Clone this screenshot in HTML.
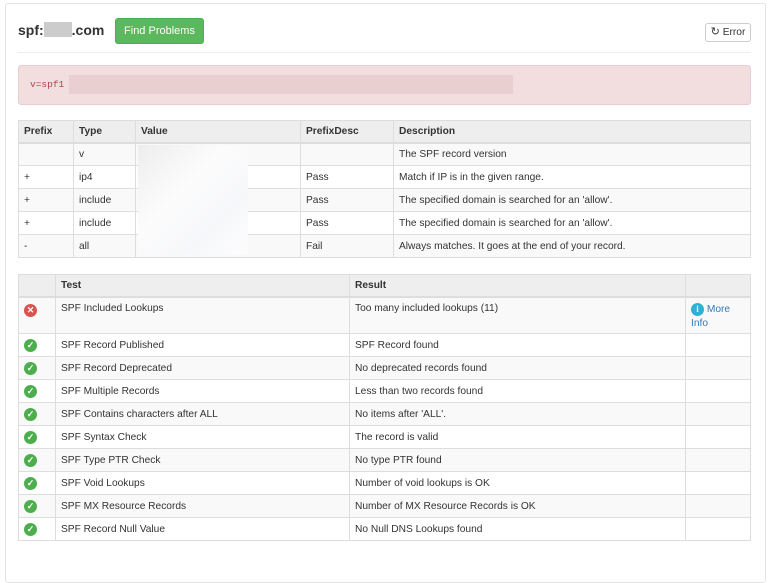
<!DOCTYPE html>
<html><head><meta charset="utf-8"><style>
*{box-sizing:border-box}
body{margin:0;width:768px;height:554px;overflow:hidden;background:#fff;font-family:"Liberation Sans",Arial,sans-serif;font-size:10.2px;color:#333}
.panel{position:absolute;left:5px;top:3px;width:761px;height:580px;border:1px solid #e3e3e3;border-radius:3px}
.title{position:absolute;left:18px;top:22px;font-size:14px;font-weight:bold;color:#333}
.blur{display:inline-block;width:28px;height:15px;background:#ccc;vertical-align:-2px}
.btn{position:absolute;left:115px;top:18px;width:89px;height:26px;background:#5cb85c;border:1px solid #4cae4c;border-radius:3px;color:#fff;font-size:11px;text-align:center;line-height:24px}
.err{position:absolute;left:705px;top:23px;width:46px;height:19px;border:1px solid #ccc;border-radius:3px;font-size:10.2px;line-height:17px;text-align:center;color:#333}
.hr{position:absolute;left:18px;top:52px;width:733px;height:1px;background:#eee}
.alert{position:absolute;left:18px;top:65px;width:733px;height:40px;background:#f2dede;border:1px solid #ebccd1;border-radius:3px}
.alert code{position:absolute;left:11px;top:13px;font-family:"Liberation Mono",monospace;font-size:9.5px;color:#a94442}
.alert .b{position:absolute;left:50px;top:9px;width:444px;height:19px;background:#e9cfcf}
table{position:absolute;left:18px;width:733px;border-collapse:collapse;table-layout:fixed}
td,th{border:1px solid #ddd;padding:0 5px;text-align:left;vertical-align:middle;height:23px;font-size:10.2px}
th{background:#eee;font-weight:bold;height:22px;border-bottom:2px solid #ddd}
tr.s td{background:#f9f9f9}
.ic{display:inline-block;width:13px;height:13px;border-radius:50%;background:#4cae4c;color:#fff;font-size:9px;line-height:13px;text-align:center;font-weight:bold}
.ic.r{background:#d9534f}
.vb{position:absolute;left:138px;top:145px;width:110px;height:110px;background:linear-gradient(135deg,#ededed,#fcfcfc 40%,#f6f7fa 70%,#fdfdfd)}
a{color:#337ab7;text-decoration:none}
.ii{display:inline-block;width:13px;height:13px;border-radius:50%;background:#31b0d5;color:#fff;font-size:9px;line-height:13px;text-align:center;font-weight:bold;font-family:"Liberation Serif",serif}
</style></head><body>
<div class="panel"></div>
<div class="title">spf:<span class="blur"></span>.com</div>
<div class="btn">Find Problems</div>
<div class="err"><span style="font-size:11px">&#x21bb;</span> Error</div>
<div class="hr"></div>
<div class="alert"><code>v=spf1</code><div class="b"></div></div>
<table style="top:120px">
<colgroup><col style="width:55px"><col style="width:62px"><col style="width:165px"><col style="width:93px"><col></colgroup>
<tr><th>Prefix</th><th>Type</th><th>Value</th><th>PrefixDesc</th><th>Description</th></tr>
<tr class="s"><td></td><td>v</td><td></td><td></td><td>The SPF record version</td></tr>
<tr><td>+</td><td>ip4</td><td></td><td>Pass</td><td>Match if IP is in the given range.</td></tr>
<tr class="s"><td>+</td><td>include</td><td></td><td>Pass</td><td>The specified domain is searched for an 'allow'.</td></tr>
<tr><td>+</td><td>include</td><td></td><td>Pass</td><td>The specified domain is searched for an 'allow'.</td></tr>
<tr class="s"><td>-</td><td>all</td><td></td><td>Fail</td><td>Always matches. It goes at the end of your record.</td></tr>
</table>
<div class="vb"></div>
<table style="top:274px">
<colgroup><col style="width:37px"><col style="width:294px"><col style="width:336px"><col></colgroup>
<tr><th></th><th>Test</th><th>Result</th><th></th></tr>
<tr class="s"><td style="vertical-align:top;padding-top:6px;height:37px"><span class="ic r">&#x2715;</span></td><td style="vertical-align:top;padding-top:5px">SPF Included Lookups</td><td style="vertical-align:top;padding-top:5px">Too many included lookups (11)</td><td style="vertical-align:top;padding-top:5px;line-height:14px"><a><span class="ii">i</span> More Info</a></td></tr>
<tr><td><span class="ic">&#x2713;</span></td><td>SPF Record Published</td><td>SPF Record found</td><td></td></tr>
<tr class="s"><td><span class="ic">&#x2713;</span></td><td>SPF Record Deprecated</td><td>No deprecated records found</td><td></td></tr>
<tr><td><span class="ic">&#x2713;</span></td><td>SPF Multiple Records</td><td>Less than two records found</td><td></td></tr>
<tr class="s"><td><span class="ic">&#x2713;</span></td><td>SPF Contains characters after ALL</td><td>No items after 'ALL'.</td><td></td></tr>
<tr><td><span class="ic">&#x2713;</span></td><td>SPF Syntax Check</td><td>The record is valid</td><td></td></tr>
<tr class="s"><td><span class="ic">&#x2713;</span></td><td>SPF Type PTR Check</td><td>No type PTR found</td><td></td></tr>
<tr><td><span class="ic">&#x2713;</span></td><td>SPF Void Lookups</td><td>Number of void lookups is OK</td><td></td></tr>
<tr class="s"><td><span class="ic">&#x2713;</span></td><td>SPF MX Resource Records</td><td>Number of MX Resource Records is OK</td><td></td></tr>
<tr><td><span class="ic">&#x2713;</span></td><td>SPF Record Null Value</td><td>No Null DNS Lookups found</td><td></td></tr>
</table>
</body></html>
